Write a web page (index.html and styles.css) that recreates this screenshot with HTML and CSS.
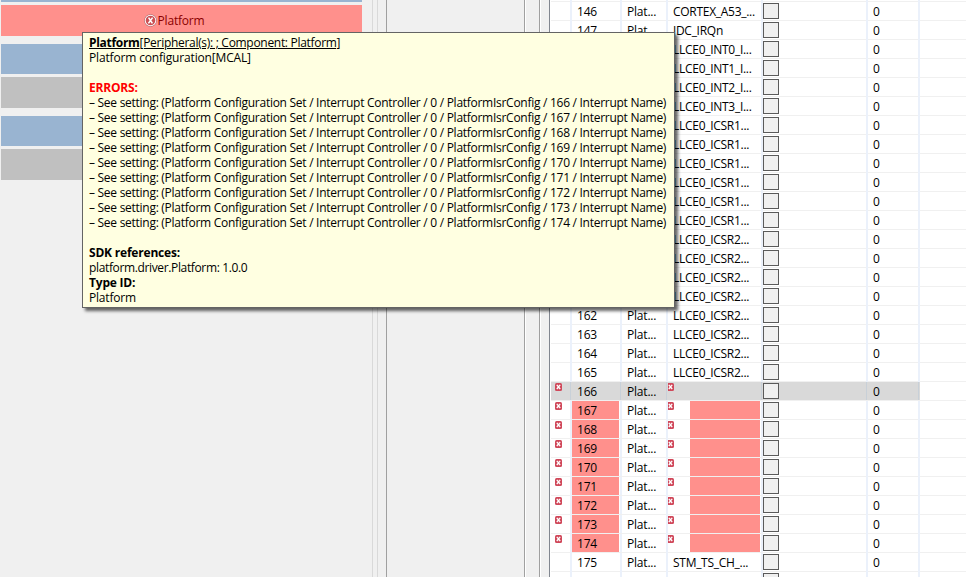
FILE: index.html
```html
<!DOCTYPE html>
<html lang="en">
<head>
<meta charset="utf-8">
<title>Platform</title>
<link rel="stylesheet" href="styles.css">
</head>
<body>
<svg class="defs" width="0" height="0">
  <symbol id="err" viewBox="0 0 7 8">
    <rect width="7" height="8" rx="1.5" fill="#d0485a"/>
    <path d="M1.8 1.8 5.2 6M5.2 1.8 1.8 6" stroke="#fff" stroke-width="1.3"/>
  </symbol>
</svg>
<main class="workspace">
  <section class="components">
    <div class="bar blue first"></div>
    <div class="bar error">
      <svg class="error-icon" viewBox="0 0 13 13"><circle cx="6.5" cy="6.5" r="6.2" fill="#a9676b"/><circle cx="6.5" cy="6.5" r="5.7" fill="#fff"/><circle cx="6.5" cy="6.5" r="4.8" fill="#cb5054"/><path d="M4.6 3.6 8.4 9.4M8.6 3.6 4.4 9.4" stroke="#fff" stroke-width="1.6"/></svg>
      <span class="bar-label">Platform</span>
    </div>
    <div class="bar blue gap"></div>
    <div class="bar gray"></div>
    <div class="bar blue gap"></div>
    <div class="bar gray"></div>
  </section>
  <div class="scroll-edge"></div>
  <div class="scroll-track"></div>
  <div class="middle"></div>
  <div class="sash"></div>
  <div class="margin"></div>
  <section class="grid" id="grid"></section>
</main>
<aside class="tooltip">
  <p class="head"><b>Platform</b><span>[Peripheral(s): ; Component: Platform]</span></p>
  <p class="conf">Platform configuration[MCAL]</p>
  <p>&nbsp;</p>
  <p class="errors"><b>ERRORS:</b></p>
  <div id="messages"></div>
  <p>&nbsp;</p>
  <p><b>SDK references:</b></p>
  <p class="driver">platform.driver.Platform: 1.0.0</p>
  <p><b>Type ID:</b></p>
  <p>Platform</p>
</aside>
<script src="app.js"></script>
</body>
</html>
```
FILE: styles.css
```css
* { box-sizing: border-box; }
html, body { margin: 0; height: 577px; overflow: hidden; }
body { background: #f0f0f0; color: #000; font: 12px/15px "Open Sans", "Noto Sans", sans-serif; }
p { margin: 0; }
.defs { position: absolute; }
.workspace { display: flex; width: 966px; height: 577px; overflow: hidden; }
.components { width: 372px; padding-left: 1px; }
.bar { width: 361px; height: 31px; margin-bottom: 3px; }
.bar.first { height: 2px; }
.bar.blue { background: #99b4d1; }
.bar.gray { background: #c0c0c0; }
.bar.gap { height: 30px; margin-top: 8px; }
.bar.error { display: flex; justify-content: center; align-items: center; gap: 1px; background: #ff908c; color: #8b0000; padding-right: 15px; margin-bottom: 0; }
.bar.first + .bar { margin-top: 3px; }
.error-icon { width: 13px; height: 13px; }
.bar-label { letter-spacing: -.2px; }
.scroll-edge { width: 6px; border: solid #d9d9d9; border-width: 0 1px; }
.scroll-track { width: 8px; }
.middle { width: 139px; border: solid #a0a0a0; border-width: 0 1px; }
.sash { width: 15px; border-left: 1px solid #fff; border-right: 1px solid #a0a0a0; }
.margin { width: 10px; border-left: 1px solid #fff; border-right: 1px solid #828790; }
.grid { flex: 1; background: #fff; padding-left: 1px; margin-top: -17px; }
.row { display: grid; grid-template-columns: 21px 50px 46px 95px 105px 52px 46px; height: 19px; border-bottom: 1px solid #f0f0f0; line-height: 19px; white-space: nowrap; }
.cell { position: relative; height: 19px; border-right: 2px solid #ebf1fb; padding-left: 5px; letter-spacing: -.2px; }
.cell:last-child { border: 0; }
.name { letter-spacing: -.28px; }
.check { display: block; width: 16px; height: 16px; margin: 1px 0 0 -5px; background: #f0f0f0; border: 1px solid #5a5a5a; }
.mark { position: absolute; top: 1px; left: 4px; width: 7px; height: 8px; }
.name .mark { left: -1px; clip-path: inset(0 0 0 1px); }
.bad .num { background: linear-gradient(90deg, #ff908c 47px, #fff 47px) padding-box; height: 18px; }
.bad .name { background: linear-gradient(90deg, #fff 22px, #ff908c 22px 92px, #fff 92px) padding-box; height: 18px; }
.selected .cell:not(:last-child) { background: #d9d9d9; border-color: #c8d0d8; border-right-width: 1px; margin-right: 1px; height: 18px; box-shadow: 1px 0 #d9d9d9; }
.tooltip { position: absolute; left: 82px; top: 32px; width: 593px; height: 276px; padding: 2px 6px; border: 1px solid #646464; background: #ffffe1; box-shadow: 3px 3px 3px rgba(0,0,0,.6); letter-spacing: -.2px; white-space: nowrap; }
.head { text-decoration: underline; letter-spacing: -.3px; }
.conf { letter-spacing: -.16px; }
.message { letter-spacing: -.275px; }
.driver { letter-spacing: -.36px; }
.errors { color: #f00; }
```
FILE: app.js
```js
const names = { 146: 'CORTEX_A53_...', 147: 'JDC_IRQn', 175: 'STM_TS_CH_...' };
for (let i = 0; i < 4; i++) names[148 + i] = `LLCE0_INT${i}_I...`;
for (let n = 152; n < 166; n++) names[n] = n < 158 ? 'LLCE0_ICSR1...' : 'LLCE0_ICSR2...';

const mark = '<svg class="mark"><use href="#err"/></svg>';
let rows = '';
for (let n = 145; n <= 176; n++) {
  const shown = n > 145 && n < 176;
  const labelled = shown && (n < 148 || n > 161);
  const failed = n >= 166 && n <= 174;
  const kind = n === 166 ? 'selected' : failed ? 'bad' : '';
  rows += `<div class="row ${kind}">
    <div class="cell">${failed ? mark : ''}</div>
    <div class="cell num">${labelled ? n : ''}</div>
    <div class="cell">${labelled ? 'Plat...' : ''}</div>
    <div class="cell name">${failed ? mark : names[n] || ''}</div>
    <div class="cell"><i class="check"></i></div>
    <div class="cell">${shown ? '0' : ''}</div>
    <div class="cell"></div>
  </div>`;
}
document.getElementById('grid').innerHTML = rows;

let lines = '';
for (let n = 166; n <= 174; n++) {
  lines += `<p class="message">– See setting: (Platform Configuration Set / Interrupt Controller / 0 / PlatformIsrConfig / ${n} / Interrupt Name)</p>`;
}
document.getElementById('messages').innerHTML = lines;
```
